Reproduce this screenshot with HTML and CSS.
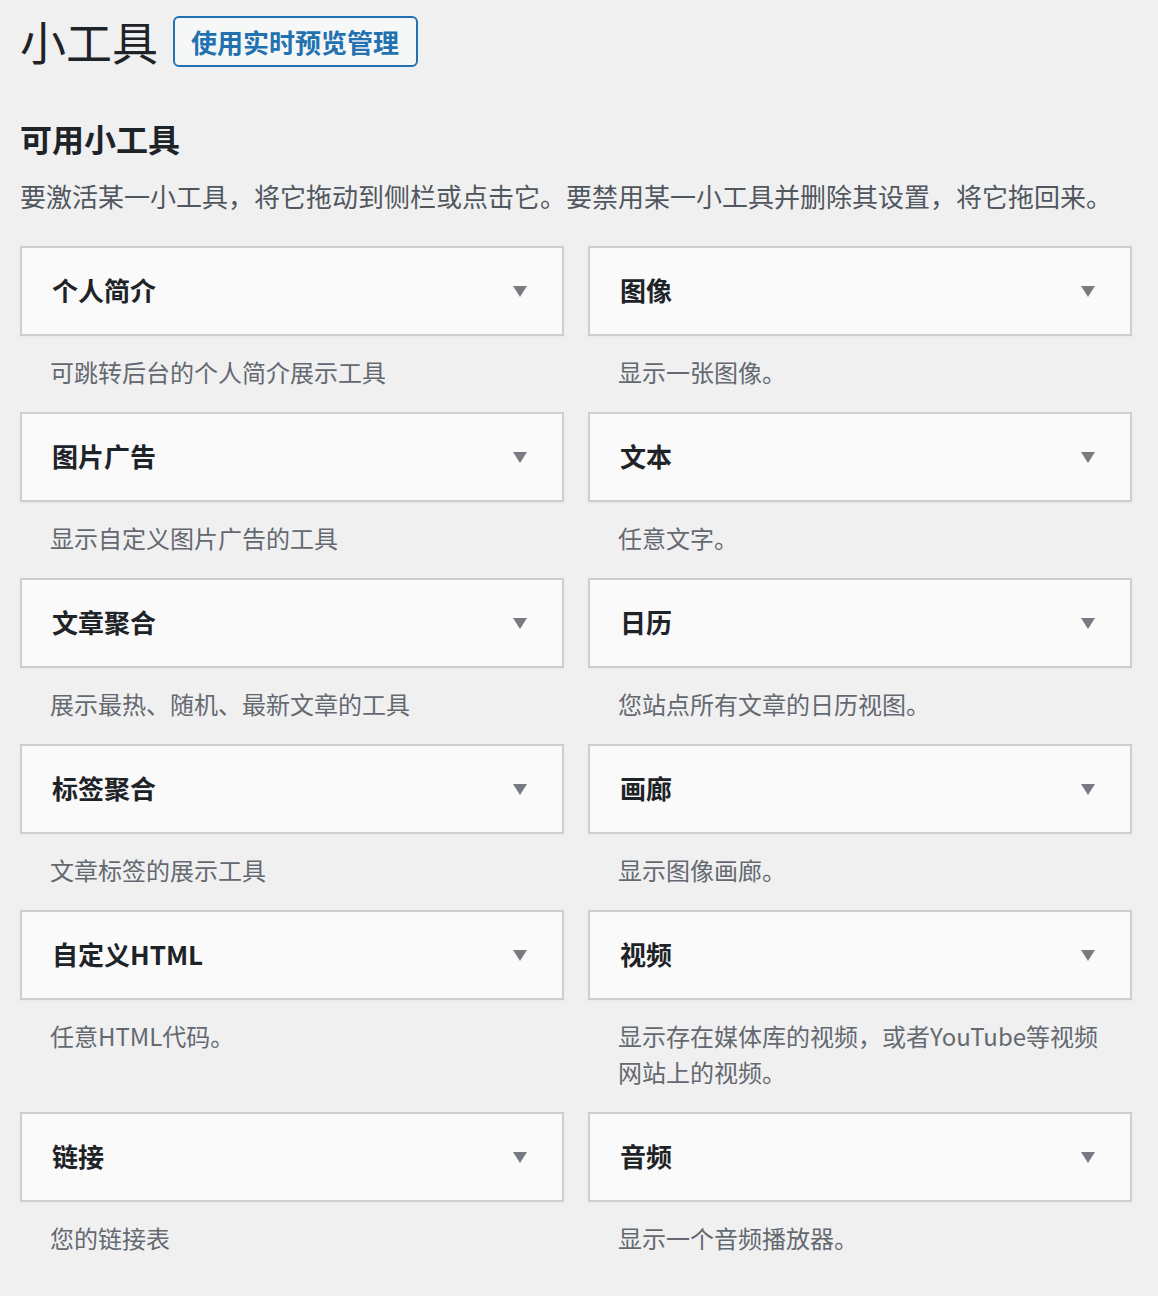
FILE: index.html
```html
<!DOCTYPE html>
<html lang="zh-CN">
<head>
    <meta charset="UTF-8">
    <title>小工具</title>
    <link rel="stylesheet" href="styles.css">
</head>
<body>
<div class="wrap">
    <div class="page-head">
        <h1>小工具</h1>
        <a class="btn-preview" href="#">使用实时预览管理</a>
    </div>

    <h2>可用小工具</h2>
    <p class="intro">要激活某一小工具，将它拖动到侧栏或点击它。要禁用某一小工具并删除其设置，将它拖回来。</p>

    <div class="widget-list">
        <div class="widget">
            <div class="widget-top"><h3>个人简介</h3><span class="arrow"></span></div>
            <div class="widget-desc">可跳转后台的个人简介展示工具</div>
        </div>
        <div class="widget">
            <div class="widget-top"><h3>图像</h3><span class="arrow"></span></div>
            <div class="widget-desc">显示一张图像。</div>
        </div>
        <div class="widget">
            <div class="widget-top"><h3>图片广告</h3><span class="arrow"></span></div>
            <div class="widget-desc">显示自定义图片广告的工具</div>
        </div>
        <div class="widget">
            <div class="widget-top"><h3>文本</h3><span class="arrow"></span></div>
            <div class="widget-desc">任意文字。</div>
        </div>
        <div class="widget">
            <div class="widget-top"><h3>文章聚合</h3><span class="arrow"></span></div>
            <div class="widget-desc">展示最热、随机、最新文章的工具</div>
        </div>
        <div class="widget">
            <div class="widget-top"><h3>日历</h3><span class="arrow"></span></div>
            <div class="widget-desc">您站点所有文章的日历视图。</div>
        </div>
        <div class="widget">
            <div class="widget-top"><h3>标签聚合</h3><span class="arrow"></span></div>
            <div class="widget-desc">文章标签的展示工具</div>
        </div>
        <div class="widget">
            <div class="widget-top"><h3>画廊</h3><span class="arrow"></span></div>
            <div class="widget-desc">显示图像画廊。</div>
        </div>
        <div class="widget">
            <div class="widget-top"><h3>自定义HTML</h3><span class="arrow"></span></div>
            <div class="widget-desc">任意HTML代码。</div>
        </div>
        <div class="widget">
            <div class="widget-top"><h3>视频</h3><span class="arrow"></span></div>
            <div class="widget-desc">显示存在媒体库的视频，或者YouTube等视频网站上的视频。</div>
        </div>
        <div class="widget">
            <div class="widget-top"><h3>链接</h3><span class="arrow"></span></div>
            <div class="widget-desc">您的链接表</div>
        </div>
        <div class="widget">
            <div class="widget-top"><h3>音频</h3><span class="arrow"></span></div>
            <div class="widget-desc">显示一个音频播放器。</div>
        </div>
    </div>
</div>
</body>
</html>
```

FILE: styles.css
```css
/* widgets admin screen */

body {
    margin: 0;
    background-color: #f0f0f1;
    color: #1d2327;
    font-family: "Noto Sans CJK SC", "Noto Sans", "Liberation Sans", sans-serif;
}
.wrap {
    padding: 16px 26px 0 20px;
}
.page-head {
    display: flex;
    align-items: center;
    height: 51px;
}
h1 {
    margin: 0 0 2px 0;
    font-size: 46px;
    font-weight: 400;
    line-height: 49px;
}
.btn-preview {
    margin-left: 15px;
    padding: 0 17px 0 16px;
    border: 2px solid #2271b1;
    border-radius: 6px;
    background-color: #f6f7f7;
    color: #2271b1;
    font-size: 26px;
    font-weight: 600;
    line-height: 47px;
    text-decoration: none;
}
h2 {
    margin: 51px 0 0 0;
    font-size: 32px;
    font-weight: 700;
    line-height: 40px;
}
.intro {
    margin: 18px 0 0 0;
    color: #50575e;
    font-size: 26px;
    line-height: 40px;
}
.widget-list {
    display: grid;
    grid-template-columns: 544px 544px;
    column-gap: 24px;
    margin-top: 30px;
}
.widget-top {
    display: flex;
    align-items: center;
    justify-content: space-between;
    height: 84px;
    padding: 0 35px 2px 30px;
    border: 2px solid #cbced2;
    background-color: #fafafa;
    box-shadow: 0 1px 2px rgba(0,0,0,0.04);
}
.widget-top h3 {
    margin: 0;
    font-size: 26px;
    font-weight: 700;
    line-height: 36px;
}
/* dropdown toggle */
.arrow {
    width: 0;
    height: 0;
    margin-top: 2px;
    border-left: 7.5px solid transparent;
    border-right: 7.5px solid transparent;
    border-top: 11px solid #787c82;
}
.widget-desc {
    padding: 18px 30px 22px 30px;
    color: #646970;
    font-size: 24px;
    line-height: 36px;
}
```
